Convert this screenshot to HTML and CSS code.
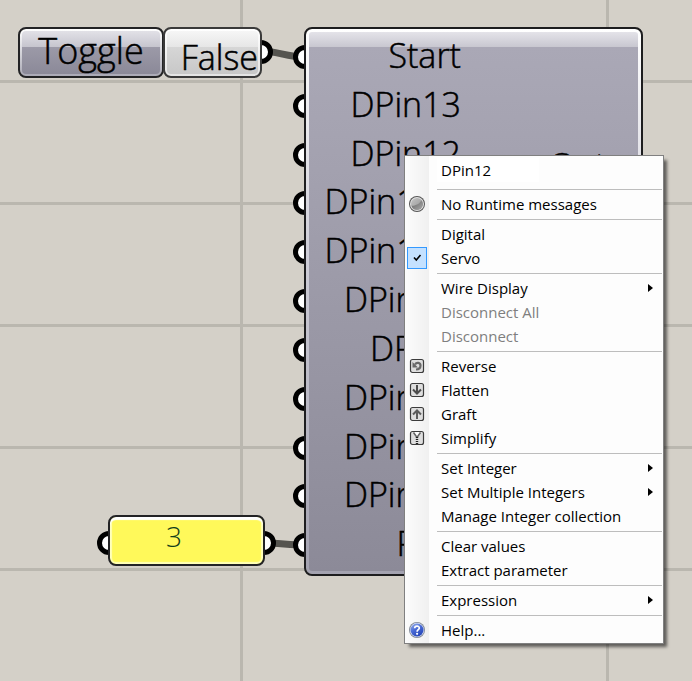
FILE: index.html
```html
<!DOCTYPE html>
<html lang="en">
<head>
<meta charset="utf-8">
<title>Node canvas</title>
<link rel="stylesheet" href="styles.css">
</head>
<body>
<main class="canvas">
  <svg class="wires" aria-hidden="true">
    <path d="M262 51C276 51 288 57 304 57"/>
    <path d="M264 543C278 543 290 545 304 545"/>
  </svg>

  <section class="node node-toggle">
    <span class="capsule capsule-name">Toggle</span>
    <button class="capsule capsule-value" type="button">False</button>
    <i class="grip grip-right"></i>
  </section>

  <section class="node node-panel">
    <i class="grip grip-left"></i>
    <div class="panel">3</div>
    <i class="grip grip-right"></i>
  </section>

  <section class="node node-component">
    <div class="component">
      <ul class="inputs">
        <li>Start</li>
        <li>DPin13</li>
        <li>DPin12</li>
        <li>DPin11<span class="pwm">~</span></li>
        <li>DPin10<span class="pwm">~</span></li>
        <li>DPin9<span class="pwm">~</span></li>
        <li>DPin8</li>
        <li>DPin6<span class="pwm">~</span></li>
        <li>DPin5<span class="pwm">~</span></li>
        <li>DPin3<span class="pwm">~</span></li>
        <li>Port</li>
      </ul>
      <div class="outputs">Out</div>
    </div>
  </section>

  <div class="menu">
    <div class="group">
      <input class="name" type="text" value="DPin12" aria-label="Parameter name">
    </div>
    <div class="group">
      <button class="item" type="button">
        <svg class="icon" viewBox="0 0 16 16">
          <defs>
            <linearGradient id="ball" x1="0" y1="0" x2="1" y2="1"><stop offset="0" stop-color="#c4c4c4"/><stop offset=".5" stop-color="#aaa"/><stop offset="1" stop-color="#858585"/></linearGradient>
            <linearGradient id="shade" x1="0" y1="0" x2="1" y2="1"><stop offset=".3" stop-color="#777"/><stop offset="1" stop-color="#a8a8a8"/></linearGradient>
          </defs>
          <circle cx="8" cy="8" r="8" fill="#555"/>
          <circle cx="8" cy="8" r="7" fill="#e2e2e2"/>
          <circle cx="8" cy="8" r="6" fill="url(#ball)"/>
          <path d="M2.400 9.500C5 10.500 11 8 12.300 4.200A5.800 5.800 0 0 1 8 13.800A5.800 5.800 0 0 1 2.400 9.500Z" fill="url(#shade)"/>
        </svg>
        <span>No Runtime messages</span>
      </button>
    </div>
    <div class="group">
      <button class="item" type="button"><span>Digital</span></button>
      <label class="item">
        <input class="check" type="checkbox" checked>
        <svg class="icon tick" viewBox="0 0 16 16"><path d="M5 7.500L7.300 10L11.500 5" fill="none" stroke="#000" stroke-width="1.600"/></svg>
        <span>Servo</span>
      </label>
    </div>
    <div class="group">
      <button class="item sub" type="button"><span>Wire Display</span></button>
      <button class="item" type="button" disabled><span>Disconnect All</span></button>
      <button class="item" type="button" disabled><span>Disconnect</span></button>
    </div>
    <div class="group">
      <button class="item" type="button">
        <svg class="icon" viewBox="0 0 16 16"><rect class="key" x="1.500" y="1.500" width="13" height="13" rx="2"/><path d="M6 6.500C7.500 4 11.500 4.300 11.500 7.500C11.500 10 10 11.300 7 11.500" fill="none" stroke="#686868" stroke-width="2.200"/><path d="M3.500 4V9.500H9Z" fill="#686868"/></svg>
        <span>Reverse</span>
      </button>
      <button class="item" type="button">
        <svg class="icon" viewBox="0 0 16 16"><rect class="key" x="1.500" y="1.500" width="13" height="13" rx="2"/><path d="M8 3V11M4 7.500L8 11.500L12 7.500" fill="none" stroke="#4c4c4c" stroke-width="2"/></svg>
        <span>Flatten</span>
      </button>
      <button class="item" type="button">
        <svg class="icon" viewBox="0 0 16 16"><rect class="key" x="1.500" y="1.500" width="13" height="13" rx="2"/><path d="M8 13V5M4 8.500L8 4.500L12 8.500" fill="none" stroke="#5c5c5c" stroke-width="2"/></svg>
        <span>Graft</span>
      </button>
      <button class="item" type="button">
        <svg class="icon" viewBox="0 0 16 16"><rect class="key" x="1.500" y="1.500" width="13" height="13" rx="2"/><path d="M5 2H11L8 6.500Z" fill="#fff"/><path d="M4.500 2.500L8 7.500L11.500 2.500" fill="none" stroke="#666" stroke-width="1.500"/><path d="M8 7V14" stroke="#222" stroke-width="2.400" stroke-dasharray="1 1"/></svg>
        <span>Simplify</span>
      </button>
    </div>
    <div class="group">
      <button class="item sub" type="button"><span>Set Integer</span></button>
      <button class="item sub" type="button"><span>Set Multiple Integers</span></button>
      <button class="item" type="button"><span>Manage Integer collection</span></button>
    </div>
    <div class="group">
      <button class="item" type="button"><span>Clear values</span></button>
      <button class="item" type="button"><span>Extract parameter</span></button>
    </div>
    <div class="group">
      <button class="item sub" type="button"><span>Expression</span></button>
    </div>
    <div class="group">
      <button class="item" type="button">
        <svg class="icon" viewBox="0 0 16 16">
          <defs><linearGradient id="help" x1="0" y1="0" x2=".6" y2="1"><stop offset="0" stop-color="#9db4ee"/><stop offset=".5" stop-color="#4a6bd6"/><stop offset="1" stop-color="#2747b8"/></linearGradient></defs>
          <circle cx="8" cy="8" r="8" fill="#7f8794"/>
          <circle cx="8" cy="8" r="7.200" fill="#d5dcf0"/>
          <circle cx="8" cy="8" r="6.500" fill="url(#help)"/>
          <path d="M5.700 6.300C5.700 3.300 10.400 3.400 10.300 6.100C10.200 7.700 8.100 7.700 8.100 9.700" fill="none" stroke="#fff" stroke-width="1.700"/>
          <circle cx="8.100" cy="11.800" r="1.100" fill="#fff"/>
        </svg>
        <span>Help...</span>
      </button>
    </div>
  </div>
</main>
</body>
</html>
```
FILE: styles.css
```css
*,
*::before,
*::after {
  box-sizing: border-box;
}

body {
  margin: 0;
  font-family: "Open Sans", "Noto Sans", sans-serif;
  color: #000;
}

button,
input {
  font: inherit;
  color: inherit;
}

.canvas {
  position: relative;
  min-height: 100vh;
  overflow: hidden;
  background-color: #d4d0c8;
  background-image:
    linear-gradient(90deg, #bab7af 3px, transparent 3px),
    linear-gradient(#bab7af 3px, transparent 3px);
  background-size: 366px 122px;
  background-position: 240px 80px;
}

.wires {
  position: absolute;
  inset: 0;
  width: 100%;
  height: 100%;
  fill: none;
  stroke: #55544f;
  stroke-width: 7px;
}

/* Nodes on the free canvas */

.node {
  position: absolute;
  display: flex;
  isolation: isolate;
  font-size: 34px;
  font-weight: 300;
  -webkit-text-stroke: 0.5px currentColor;
}

.node-toggle {
  left: 18px;
  top: 27px;
  font-size: 36px;
}

.node-panel {
  left: 108px;
  top: 515px;
  -webkit-text-stroke: 0;
}

.node-component {
  left: 304px;
  top: 27px;
}

.grip,
.inputs li::before {
  content: "";
  position: absolute;
  z-index: -1;
  width: 24px;
  height: 24px;
  border: 5px solid #000;
  border-radius: 50%;
  background: #fff;
}

.grip {
  top: 13px;
}

.node-panel .grip {
  top: 16px;
}

.grip-left {
  left: -11px;
}

.grip-right {
  right: -11px;
}

.capsule {
  height: 51px;
  padding: 2px;
  border: 2px solid #232325;
  border-radius: 8px;
  text-align: center;
  line-height: 40px;
}

.capsule-name {
  width: 146px;
  background:
    linear-gradient(#e2e1e7, #c6c5ce 16px, #9c9aa8 16px, #8b8998) content-box,
    linear-gradient(#fff, #aaa9b5) padding-box;
}

.capsule-value {
  width: 99px;
  margin-left: -1px;
  border-color: #3a3a3a;
  background:
    linear-gradient(#f6f6f6, #e6e6e6 16px, #d6d6d6 16px, #c8c8c8) content-box,
    linear-gradient(#fff, #e4e4e4) padding-box;
  font-size: 34px;
  text-align: right;
  line-height: 52px;
}

.panel {
  width: 157px;
  height: 51px;
  padding: 2px 27px 2px 2px;
  border: 2px solid #232325;
  border-radius: 8px;
  background: #fff95a;
  box-shadow: inset 0 3px 1px #fff, inset 0 0 1px 2px #ffffb8;
  color: #12401a;
  font-size: 28px;
  line-height: 34px;
  text-align: center;
}

.component {
  display: grid;
  grid-template-columns: 152px 1fr;
  width: 339px;
  height: 549px;
  padding: 3px;
  border: 2px solid #1d1d1f;
  border-radius: 8px;
  background:
    linear-gradient(#e4e3e9, #c8c7d0 15px, #aaa8b6 15px, #8c8a98) content-box,
    linear-gradient(#fff, #cfced8 40%, #a3a2b0) padding-box;
}

.inputs {
  display: grid;
  grid-auto-rows: 1fr;
  margin: 0;
  padding: 0 0 2px;
  list-style: none;
}

.inputs li {
  position: relative;
  display: flex;
  align-items: flex-start;
  justify-content: flex-end;
  line-height: 46px;
}

.inputs li::before {
  left: -16px;
  top: 13px;
}

.pwm {
  width: 26px;
  text-align: right;
}

.outputs {
  padding: 109px 0 0 88px;
  line-height: 48px;
}

/* Context menu */

.menu {
  position: absolute;
  left: 404px;
  top: 155px;
  width: 260px;
  padding: 2px 1px 1px;
  border: 1px solid #808080;
  background: linear-gradient(90deg, #fcfcfc, #f0f0f0 24px, #fdfdfd 24px);
  box-shadow: 4px 4px 3px -1px rgba(0, 0, 0, 0.55);
  font-size: 15px;
}

.group + .group::before {
  content: "";
  display: block;
  height: 1px;
  margin: 3px 0 2px 31px;
  background: #bdbdbd;
}

.name {
  display: block;
  width: 102px;
  height: 24px;
  margin: 0 0 7px 31px;
  padding: 0 4px;
  border: 0;
  background: #fff;
}

.item {
  position: relative;
  display: grid;
  grid-template-columns: 20px 1fr 14px;
  column-gap: 14px;
  align-items: center;
  width: 100%;
  height: 24px;
  padding: 0 0 0 1px;
  border: 0;
  background: none;
  line-height: 24px;
  text-align: left;
}

.item:disabled {
  color: #7f7f7f;
}

.item span {
  grid-column: 2;
  grid-row: 1;
}

.icon {
  grid-column: 1;
  grid-row: 1;
  justify-self: center;
  width: 16px;
  height: 16px;
}

.key {
  fill: #dedede;
  stroke: #3c3c3c;
  stroke-width: 1.2px;
}

.check {
  grid-column: 1;
  grid-row: 1;
  width: 20px;
  height: 22px;
  margin: 0;
  border: 1px solid #3399ff;
  background: #c4e1ff;
  appearance: none;
}

.tick {
  position: relative;
}

.sub::after {
  content: "";
  grid-column: 3;
  grid-row: 1;
  width: 5px;
  border: 4px solid transparent;
  border-left: 5px solid #000;
  border-right: 0;
  justify-self: start;
}
```
